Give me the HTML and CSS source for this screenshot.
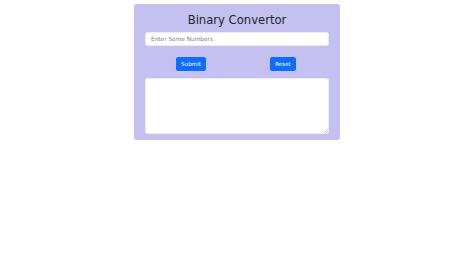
FILE: index.html
```html
<!DOCTYPE html>
<html lang="en">
<head>
<meta charset="utf-8">
<title>Binary Convertor</title>
<link rel="stylesheet" href="styles.css">
</head>
<body>
<main class="card">
  <h1 class="title">Binary Convertor</h1>
  <input class="field" type="text" placeholder="Enter Some Numbers">
  <div class="actions">
    <div class="cell"><button class="btn" type="button">Submit</button></div>
    <div class="cell"><button class="btn" type="button">Reset</button></div>
  </div>
  <div class="output-wrap">
    <textarea class="output"></textarea>
  </div>
</main>
</body>
</html>
```
FILE: styles.css
```css
html, body {
  margin: 0;
  padding: 0;
  background: #ffffff;
  font-family: "DejaVu Sans", sans-serif;
  color: #212529;
}
.card {
  box-sizing: border-box;
  width: 206px;
  margin: 4px auto 0;
  padding: 9px 11px 6px;
  background: #c4c0f0;
  border-radius: 3px;
  display: flex;
  flex-direction: column;
}
.title {
  margin: 0;
  font-size: 11.6px;
  font-weight: 400;
  line-height: 14px;
  text-align: center;
  color: #212529;
}
.field {
  box-sizing: border-box;
  margin: 4.6px 0 0;
  width: 100%;
  height: 14.5px;
  padding: 0 5px;
  font-family: "DejaVu Sans", sans-serif;
  font-size: 5.8px;
  color: #212529;
  background: #ffffff;
  border: 0.4px solid #eceaf8;
  border-radius: 2.5px;
  outline: none;
}
.field::placeholder {
  color: #7a7f86;
}
.actions {
  display: grid;
  grid-template-columns: 1fr 1fr;
  margin-top: 11.3px;
}
.cell {
  display: flex;
  justify-content: center;
}
.btn {
  box-sizing: border-box;
  height: 13.5px;
  padding: 0 4.4px;
  font-family: "DejaVu Sans", sans-serif;
  font-size: 5.6px;
  color: #ffffff;
  background: #0d6efd;
  border: 0.4px solid #0d6efd;
  border-radius: 2px;
}
.output-wrap {
  position: relative;
  margin-top: 7.6px;
}
.output {
  box-sizing: border-box;
  display: block;
  width: 100%;
  height: 55.7px;
  padding: 2px 5px;
  font-family: "DejaVu Sans", sans-serif;
  font-size: 5.8px;
  background: #ffffff;
  border: 0.4px solid #eceaf8;
  border-radius: 2.5px;
  outline: none;
  resize: none;
}
.output-wrap::after {
  content: "";
  position: absolute;
  right: 1px;
  bottom: 1px;
  width: 4px;
  height: 4px;
  background: linear-gradient(135deg, transparent 45%, #c9c9d4 45%, #c9c9d4 58%, transparent 58%, transparent 72%, #c9c9d4 72%, #c9c9d4 85%, transparent 85%);
}
```
